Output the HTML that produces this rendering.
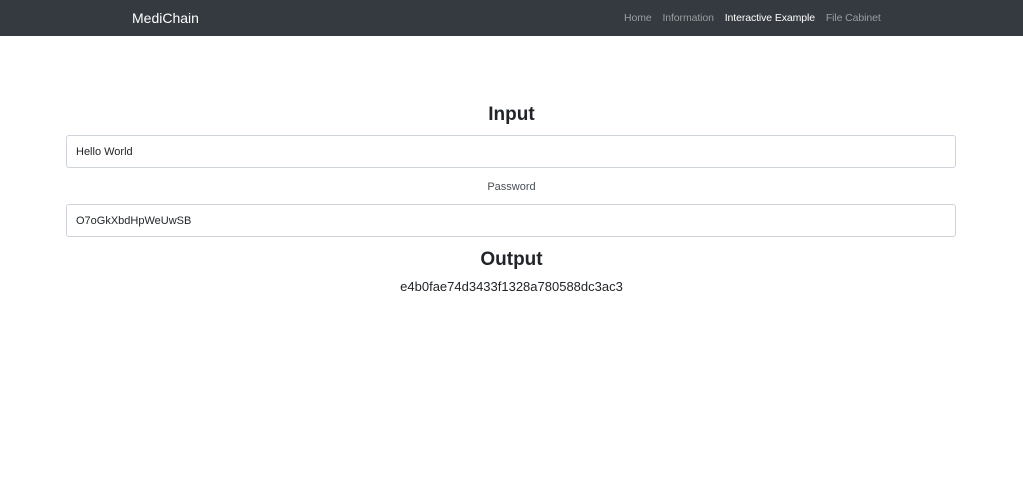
<!DOCTYPE html>
<html><head><style>
body{margin:0;width:1023px;height:500px;background:#fff;font-family:"Liberation Sans",sans-serif;color:#212529;position:relative;overflow:hidden}
.nav{position:absolute;left:0;top:0;width:1023px;height:36px;background:#343a40}
.brand{position:absolute;left:132px;top:10px;color:#fff;font-size:14px}
.links{position:absolute;left:624px;top:12px;font-size:10.5px;color:#9a9da0;white-space:nowrap;letter-spacing:-0.1px}
.links span{margin-right:8px}
.links .a{color:#fff}
.h{position:absolute;left:0;width:1023px;text-align:center;font-size:19px;font-weight:bold}
.in{position:absolute;left:66px;border:1px solid #ced4da;border-radius:3px;font-size:11px;padding-left:9px;box-sizing:border-box;width:890px}
.c{position:absolute;left:0;width:1023px;text-align:center}
</style></head><body>
<div class="nav"><div class="brand">MediChain</div>
<div class="links"><span>Home</span> <span>Information</span> <span class="a">Interactive Example</span> <span>File Cabinet</span></div></div>
<div class="h" style="top:104px">Input</div>
<div class="in" style="top:135px;height:33px;line-height:33px">Hello World</div>
<div class="c" style="top:181px;font-size:11px;color:#495057">Password</div>
<div class="in" style="top:204px;height:33px;line-height:33px">O7oGkXbdHpWeUwSB</div>
<div class="h" style="top:249px">Output</div>
<div class="c" style="top:279px;font-size:13px">e4b0fae74d3433f1328a780588dc3ac3</div>
</body></html>
